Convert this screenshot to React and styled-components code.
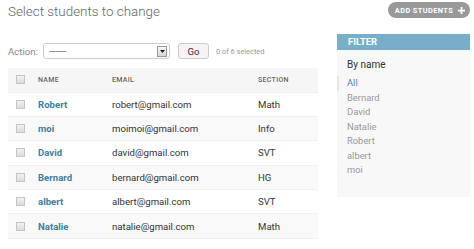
import React from "react";
import styled, { createGlobalStyle } from "styled-components";

const GlobalStyle = createGlobalStyle`
  body {
    margin: 0;
    background: #fff;
    font-family: Roboto, "Liberation Sans", sans-serif;
    color: #333;
  }
`;

const students = [
  { name: "Robert", email: "robert@gmail.com", section: "Math" },
  { name: "moi", email: "moimoi@gmail.com", section: "Info" },
  { name: "David", email: "david@gmail.com", section: "SVT" },
  { name: "Bernard", email: "bernard@gmail.com", section: "HG" },
  { name: "albert", email: "albert@gmail.com", section: "SVT" },
  { name: "Natalie", email: "natalie@gmail.com", section: "Math" },
];

const filterNames = ["All", "Bernard", "David", "Natalie", "Robert", "albert", "moi"];

const App = () => {
  return (
    <>
      <GlobalStyle />
      <Page>
        <TopBar>
          <Title>Select students to change</Title>
          <AddButton>
            ADD STUDENTS
            <PlusIcon viewBox="0 0 8 8">
              <path d="M3 0h2v3h3v2H5v3H3V5H0V3h3z" fill="#fff" />
            </PlusIcon>
          </AddButton>
        </TopBar>
        <Body>
          <Main>
            <Actions>
              <ActionLabel>Action:</ActionLabel>
              <Select>
                <SelectText>---------</SelectText>
                <SelectArrow>
                  <svg width="5" height="3" viewBox="0 0 5 3">
                    <path d="M0 0h5L2.5 3z" fill="#222" />
                  </svg>
                </SelectArrow>
              </Select>
              <GoButton>Go</GoButton>
              <Counter>0 of 6 selected</Counter>
            </Actions>
            <Table>
              <thead>
                <tr>
                  <HeadCell $width={22}>
                    <Checkbox />
                  </HeadCell>
                  <HeadCell $width={74}>Name</HeadCell>
                  <HeadCell $width={146}>Email</HeadCell>
                  <HeadCell>Section</HeadCell>
                </tr>
              </thead>
              <tbody>
                {students.map((s, i) => (
                  <Row key={s.name} $odd={i % 2 === 1}>
                    <Cell>
                      <Checkbox />
                    </Cell>
                    <Cell>
                      <NameLink>{s.name}</NameLink>
                    </Cell>
                    <Cell>{s.email}</Cell>
                    <Cell>{s.section}</Cell>
                  </Row>
                ))}
              </tbody>
            </Table>
          </Main>
          <Filter>
            <FilterHeader>Filter</FilterHeader>
            <FilterTitle>By name</FilterTitle>
            <FilterList>
              {filterNames.map((n, i) => (
                <FilterItem key={n} $selected={i === 0}>
                  {n}
                </FilterItem>
              ))}
            </FilterList>
          </Filter>
        </Body>
      </Page>
    </>
  );
};

const Page = styled.div`
  width: 474px;
  height: 249px;
  box-sizing: border-box;
  padding: 0 4px 0 8px;
  overflow: hidden;
`;

const TopBar = styled.div`
  display: flex;
  justify-content: space-between;
  align-items: flex-start;
  height: 34px;
`;

const Title = styled.h1`
  margin: 3px 0 0;
  font-size: 13.4px;
  line-height: 18px;
  font-weight: 300;
  color: #666;
`;

const AddButton = styled.div`
  margin-top: 2px;
  width: 82px;
  height: 16px;
  box-sizing: border-box;
  display: flex;
  align-items: center;
  justify-content: center;
  gap: 5px;
  padding-left: 2px;
  background: #999;
  border-radius: 9px;
  color: #fff;
  font-size: 7.4px;
  font-weight: 700;
  letter-spacing: 0.4px;
`;

const PlusIcon = styled.svg`
  width: 7px;
  height: 7px;
`;

const Body = styled.div`
  display: flex;
  align-items: flex-start;
  justify-content: space-between;
`;

const Main = styled.div`
  width: 310px;
  padding-top: 9px;
`;

const Actions = styled.div`
  display: flex;
  align-items: center;
  height: 16px;
  margin-bottom: 9px;
`;

const ActionLabel = styled.span`
  font-size: 9.6px;
  color: #888;
  width: 35px;
`;

const Select = styled.div`
  width: 127px;
  height: 16px;
  box-sizing: border-box;
  border: 1px solid #ccc;
  border-radius: 3px;
  display: flex;
  align-items: center;
  justify-content: space-between;
  padding: 0 2px 0 5px;
  background: #fff;
`;

const SelectText = styled.span`
  font-size: 8px;
  color: #333;
  letter-spacing: -0.3px;
`;

const SelectArrow = styled.span`
  width: 10px;
  height: 11px;
  box-sizing: border-box;
  border: 1px solid #999;
  background: linear-gradient(#f4f4f4, #d8d8d8);
  display: flex;
  align-items: center;
  justify-content: center;
`;

const GoButton = styled.div`
  margin-left: 8px;
  width: 31px;
  height: 16px;
  box-sizing: border-box;
  border: 1px solid #ccc;
  border-radius: 3px;
  background: #f4f4f4;
  display: flex;
  align-items: center;
  justify-content: center;
  font-size: 9.6px;
  color: #333;
`;

const Counter = styled.span`
  margin-left: 7px;
  font-size: 7.4px;
  color: #999;
`;

const Table = styled.table`
  width: 310px;
  border-collapse: collapse;
`;

const HeadCell = styled.th`
  width: ${(p) => (p.$width ? `${p.$width}px` : "auto")};
  height: 24px;
  padding: 0 0 0 8px;
  box-sizing: border-box;
  background: #f6f6f6;
  text-align: left;
  font-size: 7px;
  font-weight: 500;
  text-transform: uppercase;
  letter-spacing: 0.3px;
  color: #666;
  vertical-align: middle;
  border-bottom: 1px solid #f0f0f0;
`;

const Row = styled.tr`
  background: ${(p) => (p.$odd ? "#f9f9f9" : "#fff")};
`;

const Cell = styled.td`
  height: 24.4px;
  padding: 0 0 0 8px;
  box-sizing: border-box;
  font-size: 9.6px;
  color: #333;
  vertical-align: middle;
  border-bottom: 1px solid #f0f0f0;
`;

const NameLink = styled.span`
  color: #447e9b;
  font-weight: 700;
`;

const Checkbox = styled.span`
  display: block;
  width: 9px;
  height: 9px;
  box-sizing: border-box;
  border: 1px solid #c4c4c4;
  background: linear-gradient(#f2f2f2, #dcdcdc);
`;

const Filter = styled.div`
  width: 133px;
  background: #f8f8f8;
  padding-bottom: 19px;
`;

const FilterHeader = styled.div`
  height: 16px;
  line-height: 16px;
  padding-left: 11px;
  background: #79aec8;
  color: #fff;
  font-size: 9.4px;
  font-weight: 700;
  text-transform: uppercase;
`;

const FilterTitle = styled.div`
  margin-top: 8px;
  padding-left: 10px;
  line-height: 14px;
  font-size: 10px;
  color: #333;
`;

const FilterList = styled.ul`
  list-style: none;
  margin: 4px 0 0;
  padding: 0;
`;

const FilterItem = styled.li`
  line-height: 14.5px;
  font-size: 9.4px;
  padding-left: ${(p) => (p.$selected ? "8px" : "10px")};
  border-left: ${(p) => (p.$selected ? "2px solid #e6e6e6" : "none")};
  color: ${(p) => (p.$selected ? "#5b80b2" : "#999")};
`;

export default App;
